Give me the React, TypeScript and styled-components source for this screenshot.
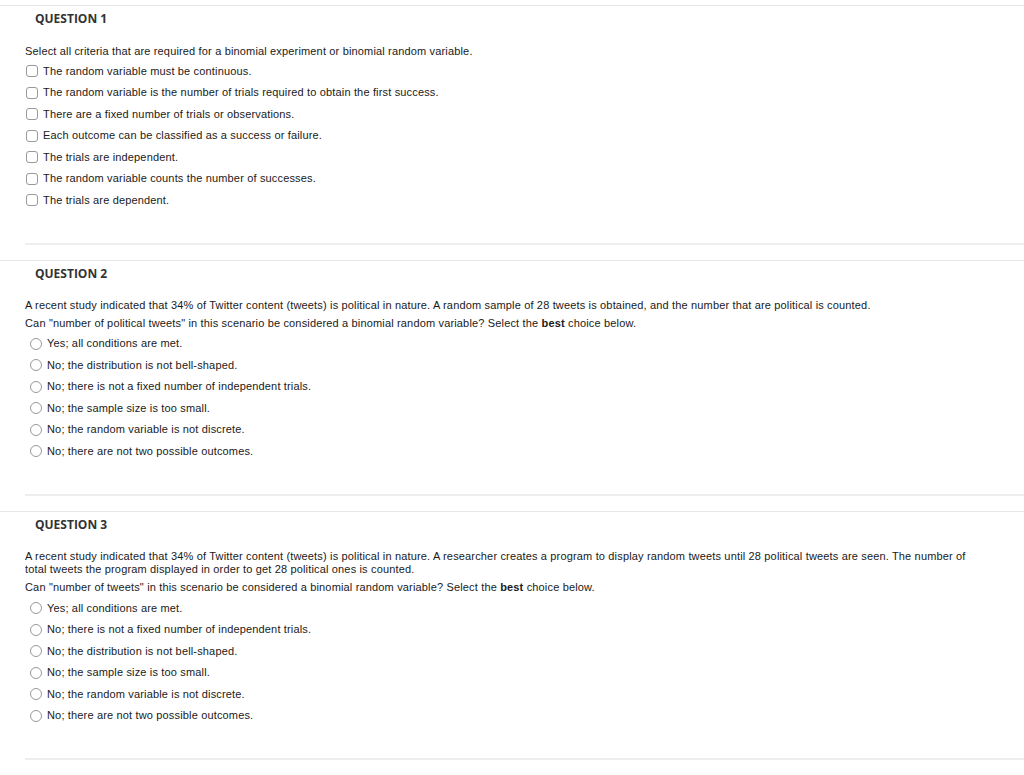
import React from "react";
import styled, { createGlobalStyle } from "styled-components";

const GlobalStyle = createGlobalStyle`
  body {
    margin: 0;
    background: #fff;
    font-family: "Liberation Sans", Arial, sans-serif;
  }
`;

const Page = styled.div`
  width: 1024px;
  padding-top: 5px;
`;

const Section = styled.section`
  border-top: 1px solid #e6e6e6;
  padding-top: 5px;
  margin-bottom: 15px;
`;

const Heading = styled.h2`
  margin: 0 0 0 35px;
  font-family: "Open Sans", sans-serif;
  font-weight: 700;
  font-size: 12px;
  line-height: 16px;
  color: #333;
`;

const Body = styled.div`
  padding: 0 0 0 25px;
  margin-top: 17.6px;
  color: #1a1a1a;
  font-size: 11px;
  letter-spacing: 0.16px;
  line-height: 13px;
`;

const Prompt = styled.p`
  margin: 0 0 5px;
  max-width: 950px;
`;

const Options = styled.ul`
  list-style: none;
  margin: -2px 0 0;
  padding: 0;
`;

const Option = styled.li<{ $kind: "check" | "radio" }>`
  display: flex;
  align-items: center;
  height: 21.5px;
  padding-left: ${(p) => (p.$kind === "check" ? "1px" : "5px")};
`;

const Box = styled.span<{ $kind: "check" | "radio" }>`
  width: 10px;
  height: 10px;
  flex: none;
  border: 1px solid #999;
  border-radius: ${(p) => (p.$kind === "check" ? "3px" : "50%")};
  margin-right: 5px;
`;

const Divider = styled.hr`
  margin: 31.5px 0 0 25px;
  border: none;
  border-top: 2px solid #eeeeee;
`;

type Q = {
  title: string;
  kind: "check" | "radio";
  prompt: React.ReactNode[];
  options: string[];
};

const questions: Q[] = [
  {
    title: "QUESTION 1",
    kind: "check",
    prompt: [
      "Select all criteria that are required for a binomial experiment or binomial random variable.",
    ],
    options: [
      "The random variable must be continuous.",
      "The random variable is the number of trials required to obtain the first success.",
      "There are a fixed number of trials or observations.",
      "Each outcome can be classified as a success or failure.",
      "The trials are independent.",
      "The random variable counts the number of successes.",
      "The trials are dependent.",
    ],
  },
  {
    title: "QUESTION 2",
    kind: "radio",
    prompt: [
      "A recent study indicated that 34% of Twitter content (tweets) is political in nature. A random sample of 28 tweets is obtained, and the number that are political is counted.",
      <>
        Can "number of political tweets" in this scenario be considered a binomial random variable? Select the <b>best</b> choice below.
      </>,
    ],
    options: [
      "Yes; all conditions are met.",
      "No; the distribution is not bell-shaped.",
      "No; there is not a fixed number of independent trials.",
      "No; the sample size is too small.",
      "No; the random variable is not discrete.",
      "No; there are not two possible outcomes.",
    ],
  },
  {
    title: "QUESTION 3",
    kind: "radio",
    prompt: [
      "A recent study indicated that 34% of Twitter content (tweets) is political in nature. A researcher creates a program to display random tweets until 28 political tweets are seen. The number of total tweets the program displayed in order to get 28 political ones is counted.",
      <>
        Can "number of tweets" in this scenario be considered a binomial random variable? Select the <b>best</b> choice below.
      </>,
    ],
    options: [
      "Yes; all conditions are met.",
      "No; there is not a fixed number of independent trials.",
      "No; the distribution is not bell-shaped.",
      "No; the sample size is too small.",
      "No; the random variable is not discrete.",
      "No; there are not two possible outcomes.",
    ],
  },
];

export default function App() {
  return (
    <Page>
      <GlobalStyle />
      {questions.map((q) => (
        <Section key={q.title}>
          <Heading>{q.title}</Heading>
          <Body>
            {q.prompt.map((p, i) => (
              <Prompt key={i}>{p}</Prompt>
            ))}
            <Options>
              {q.options.map((o) => (
                <Option key={o} $kind={q.kind}>
                  <Box $kind={q.kind} />
                  {o}
                </Option>
              ))}
            </Options>
          </Body>
          <Divider />
        </Section>
      ))}
    </Page>
  );
}
